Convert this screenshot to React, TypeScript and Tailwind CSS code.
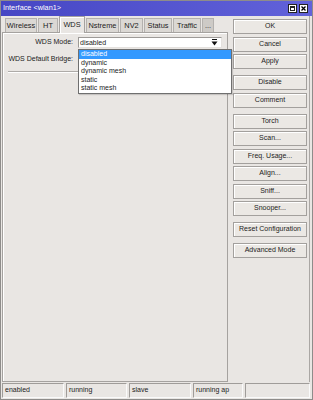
import React from 'react';

const tabs = [
  { label: 'Wireless', w: 'w-[32px]' },
  { label: 'HT', w: 'w-[20px]' },
  { label: 'WDS', w: 'w-[26px]', active: true },
  { label: 'Nstreme', w: 'w-[33px]' },
  { label: 'NV2', w: 'w-[23px]' },
  { label: 'Status', w: 'w-[28px]' },
  { label: 'Traffic', w: 'w-[28px]' },
  { label: '...', w: 'w-[12px]', dim: true },
];

const buttonGroups = [
  ['OK', 'Cancel', 'Apply'],
  ['Disable', 'Comment'],
  ['Torch', 'Scan...', 'Freq. Usage...', 'Align...', 'Sniff...', 'Snooper...'],
  ['Reset Configuration'],
  ['Advanced Mode'],
];

const modes = ['disabled', 'dynamic', 'dynamic mesh', 'static', 'static mesh'];

const statusFields = [
  { text: 'enabled', w: 'w-[62px]' },
  { text: 'running', w: 'w-[61px]' },
  { text: 'slave', w: 'w-[62px]' },
  { text: 'running ap', w: 'w-[50px]' },
  { text: '', w: 'flex-1' },
];

function DropArrow() {
  return (
    <svg width="7" height="7" viewBox="0 0 7 7">
      <rect x="1" y="0" width="5" height="1" fill="#111" />
      <path d="M0.5 2.5 H6.5 L3.5 6.5 Z" fill="#111" />
    </svg>
  );
}

function SelectBox({ value }: { value: string }) {
  return (
    <div className="w-[144px] h-[11px] bg-white border border-[#9d9a97] border-b-[#e4e1de] border-r-[#e4e1de] flex items-center justify-between pl-[1px] pr-[3px]">
      <span className="leading-none">{value}</span>
      <DropArrow />
    </div>
  );
}

export default function App() {
  return (
    <div className="w-[313px] h-[400px] bg-[#e9e6e3] border border-[#8e8c8a] flex flex-col relative overflow-hidden font-['Liberation_Sans',Arial,sans-serif] text-[7px] text-[#1c1c1c]">
      {/* title bar */}
      <div className="h-[15px] shrink-0 bg-linear-to-r from-[#4646c4] to-[#6262da] flex items-center justify-between pl-[2px] pr-[4px]">
        <span className="text-white text-[7.3px]">{'Interface <wlan1>'}</span>
        <div className="flex gap-[2px]">
          <div className="w-[9px] h-[9px] bg-white border border-[#222] flex items-center justify-center">
            <div className="w-[5px] h-[5px] border border-[#222] border-t-2" />
          </div>
          <div className="w-[9px] h-[9px] bg-white border border-[#222] flex items-center justify-center">
            <svg width="5" height="5" viewBox="0 0 5 5">
              <path d="M0.5 0.5 L4.5 4.5 M4.5 0.5 L0.5 4.5" stroke="#000" strokeWidth="1.3" />
            </svg>
          </div>
        </div>
      </div>

      {/* body */}
      <div className="flex flex-1 min-h-0 pl-[1px] pr-[2px]">
        <div className="w-[226px] flex flex-col">
          <div className="h-[16px] shrink-0 flex items-end pl-[3px] gap-[1px]">
            {tabs.map((t) =>
              t.active ? (
                <div
                  key={t.label}
                  className={`${t.w} h-[17px] -mb-[1px] relative z-10 bg-[#e9e6e3] border border-b-0 border-[#a5a29f] shadow-[inset_1px_1px_0_#fff] flex items-center justify-center text-[7.4px]`}
                >
                  {t.label}
                </div>
              ) : (
                <div
                  key={t.label}
                  className={`${t.w} h-[14px] ${t.dim ? 'bg-[#cdcac6]' : 'bg-[#dbd8d4]'} border border-b-0 border-[#b4b1ae] flex items-center justify-center text-[7.4px]`}
                >
                  {t.label}
                </div>
              )
            )}
          </div>
          <div className="flex-1 border border-[#a5a29f] shadow-[inset_1px_1px_0_#fff] flex flex-col pt-[4px]">
            <div className="flex items-center gap-[5px]">
              <div className="w-[70px] text-right">WDS Mode:</div>
              <SelectBox value="disabled" />
            </div>
            <div className="flex items-center gap-[5px] mt-[6px]">
              <div className="w-[70px] text-right whitespace-nowrap">WDS Default Bridge:</div>
              <SelectBox value="" />
            </div>
            <div className="ml-[5px] w-[214px] mt-[6px] border-t border-[#aeaba8] border-b border-b-white" />
          </div>
        </div>

        {/* buttons */}
        <div className="flex-1 border-r border-[#aaa7a4] pt-[3px] flex flex-col gap-[6px]">
          {buttonGroups.map((g, i) => (
            <div key={i} className="ml-[5px] w-[74px] flex flex-col gap-[2.5px]">
              {g.map((b) => (
                <div
                  key={b}
                  className="h-[15px] bg-[#ebe8e4] border border-[#a3a09d] shadow-[inset_1px_1px_0_#fff] flex items-center justify-center whitespace-nowrap"
                >
                  {b}
                </div>
              ))}
            </div>
          ))}
        </div>
      </div>

      {/* status bar */}
      <div className="h-[15px] shrink-0 mt-[1px] mb-[1px] flex gap-[2px] pl-[1px] pr-[2px]">
        {statusFields.map((f, i) => (
          <div
            key={i}
            className={`${f.w} border border-[#9f9c99] border-b-[#fafafa] border-r-[#fafafa] flex items-center pl-[2px]`}
          >
            {f.text}
          </div>
        ))}
      </div>

      {/* open dropdown list */}
      <div className="absolute left-[77px] top-[48px] w-[154px] bg-white border border-[#6f6f6f] shadow-[1px_1px_1px_rgba(0,0,0,0.15)]">
        {modes.map((m, i) => (
          <div
            key={m}
            className={`h-[8.6px] flex items-center pl-[2px] ${i === 0 ? 'bg-[#3399ff] text-white' : ''}`}
          >
            {m}
          </div>
        ))}
      </div>
    </div>
  );
}
